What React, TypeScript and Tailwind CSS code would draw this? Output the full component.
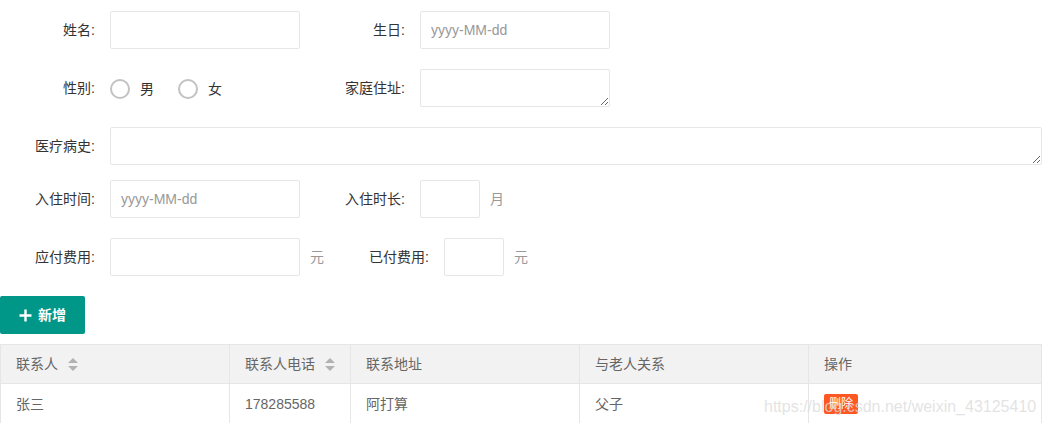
import * as React from "react"

const font = { fontFamily: '"Liberation Sans", "Noto Sans CJK SC", sans-serif' }

function Label({ children, w = "w-[110px]" }: { children: React.ReactNode; w?: string }) {
  return (
    <label className={`${w} shrink-0 pr-[15px] text-right text-[14px] leading-[38px] text-[#333]`}>
      {children}
    </label>
  )
}

function TextInput({ placeholder, w = "w-[190px]" }: { placeholder?: string; w?: string }) {
  return (
    <input
      placeholder={placeholder}
      className={`${w} h-[38px] shrink-0 rounded-[2px] border border-[#e6e6e6] bg-white px-[10px] text-[14px] text-[#333] outline-none placeholder:text-[#999]`}
    />
  )
}

function Unit({ children }: { children: React.ReactNode }) {
  return <span className="mr-[10px] ml-[10px] text-[14px] leading-[38px] text-[#999]">{children}</span>
}

function Radio({ label }: { label: string }) {
  return (
    <span className="mr-[24px] flex items-center">
      <span className="h-[20px] w-[20px] rounded-full border-2 border-[#c2c2c2]" />
      <span className="ml-[10px] text-[14px] text-[#333]">{label}</span>
    </span>
  )
}

function SortIcon() {
  return (
    <svg width="10" height="13" viewBox="0 0 10 13" className="ml-[10px] inline-block">
      <path d="M5 0 L10 5 L0 5 Z" fill="#b2b2b2" />
      <path d="M0 8 L10 8 L5 13 Z" fill="#b2b2b2" />
    </svg>
  )
}

export default function App() {
  return (
    <div className="relative w-[1046px] overflow-hidden bg-white pt-[11px]" style={font}>
      <div className="mb-[20px] flex">
        <Label>姓名:</Label>
        <TextInput />
        <div className="w-[10px]" />
        <Label>生日:</Label>
        <TextInput placeholder="yyyy-MM-dd" />
      </div>

      <div className="mb-[20px] flex">
        <Label>性别:</Label>
        <div className="flex w-[190px] items-center pt-[2px]">
          <Radio label="男" />
          <Radio label="女" />
        </div>
        <div className="w-[10px]" />
        <Label>家庭住址:</Label>
        <textarea className="h-[38px] w-[190px] rounded-[2px] border border-[#e6e6e6] outline-none" />
      </div>

      <div className="mb-[15px] flex pr-[4px]">
        <Label>医疗病史:</Label>
        <textarea className="h-[38px] flex-1 rounded-[2px] border border-[#e6e6e6] outline-none" />
      </div>

      <div className="mb-[20px] flex">
        <Label>入住时间:</Label>
        <TextInput placeholder="yyyy-MM-dd" />
        <div className="w-[10px]" />
        <Label>入住时长:</Label>
        <TextInput w="w-[60px]" />
        <Unit>月</Unit>
      </div>

      <div className="mb-[20px] flex">
        <Label>应付费用:</Label>
        <TextInput />
        <Unit>元</Unit>
        <Label>已付费用:</Label>
        <TextInput w="w-[60px]" />
        <Unit>元</Unit>
      </div>

      <button className="flex h-[38px] w-[85px] items-center rounded-[2px] bg-[#009688] pl-[19px] text-[14px] font-bold text-white">
        <svg width="13" height="13" viewBox="0 0 13 13" className="mr-[6px]">
          <path d="M6.5 0.5 V12.5 M0.5 6.5 H12.5" stroke="white" strokeWidth="2.4" />
        </svg>
        新增
      </button>

      <table className="mt-[10px] w-[1042px] border-collapse text-[14px] text-[#666]">
        <thead>
          <tr className="bg-[#f2f2f2]">
            <th className="w-[229px] border border-[#e6e6e6] px-[15px] py-[9px] text-left font-normal leading-[20px]">
              <span className="flex items-center">联系人<SortIcon /></span>
            </th>
            <th className="w-[121px] border border-[#e6e6e6] px-[15px] py-[9px] text-left font-normal leading-[20px]">
              <span className="flex items-center whitespace-nowrap">联系人电话<SortIcon /></span>
            </th>
            <th className="w-[229px] border border-[#e6e6e6] px-[15px] py-[9px] text-left font-normal leading-[20px]">联系地址</th>
            <th className="w-[229px] border border-[#e6e6e6] px-[15px] py-[9px] text-left font-normal leading-[20px]">与老人关系</th>
            <th className="border border-[#e6e6e6] px-[15px] py-[9px] text-left font-normal leading-[20px]">操作</th>
          </tr>
        </thead>
        <tbody>
          <tr>
            <td className="border border-[#e6e6e6] px-[15px] py-[9px] leading-[20px]">张三</td>
            <td className="border border-[#e6e6e6] px-[15px] py-[9px] leading-[20px]">178285588</td>
            <td className="border border-[#e6e6e6] px-[15px] py-[9px] leading-[20px]">阿打算</td>
            <td className="border border-[#e6e6e6] px-[15px] py-[9px] leading-[20px]">父子</td>
            <td className="border border-[#e6e6e6] px-[15px] py-[9px] leading-[20px]">
              <span className="inline-block h-[20px] rounded-[2px] bg-[#ff5722] px-[5px] text-[12px] leading-[20px] text-white">删除</span>
            </td>
          </tr>
        </tbody>
      </table>

      <span className="pointer-events-none absolute left-[764px] top-[395px] whitespace-nowrap text-[16px] text-[#dcdcdc]/80">
        https://blog.csdn.net/weixin_43125410
      </span>
    </div>
  )
}
